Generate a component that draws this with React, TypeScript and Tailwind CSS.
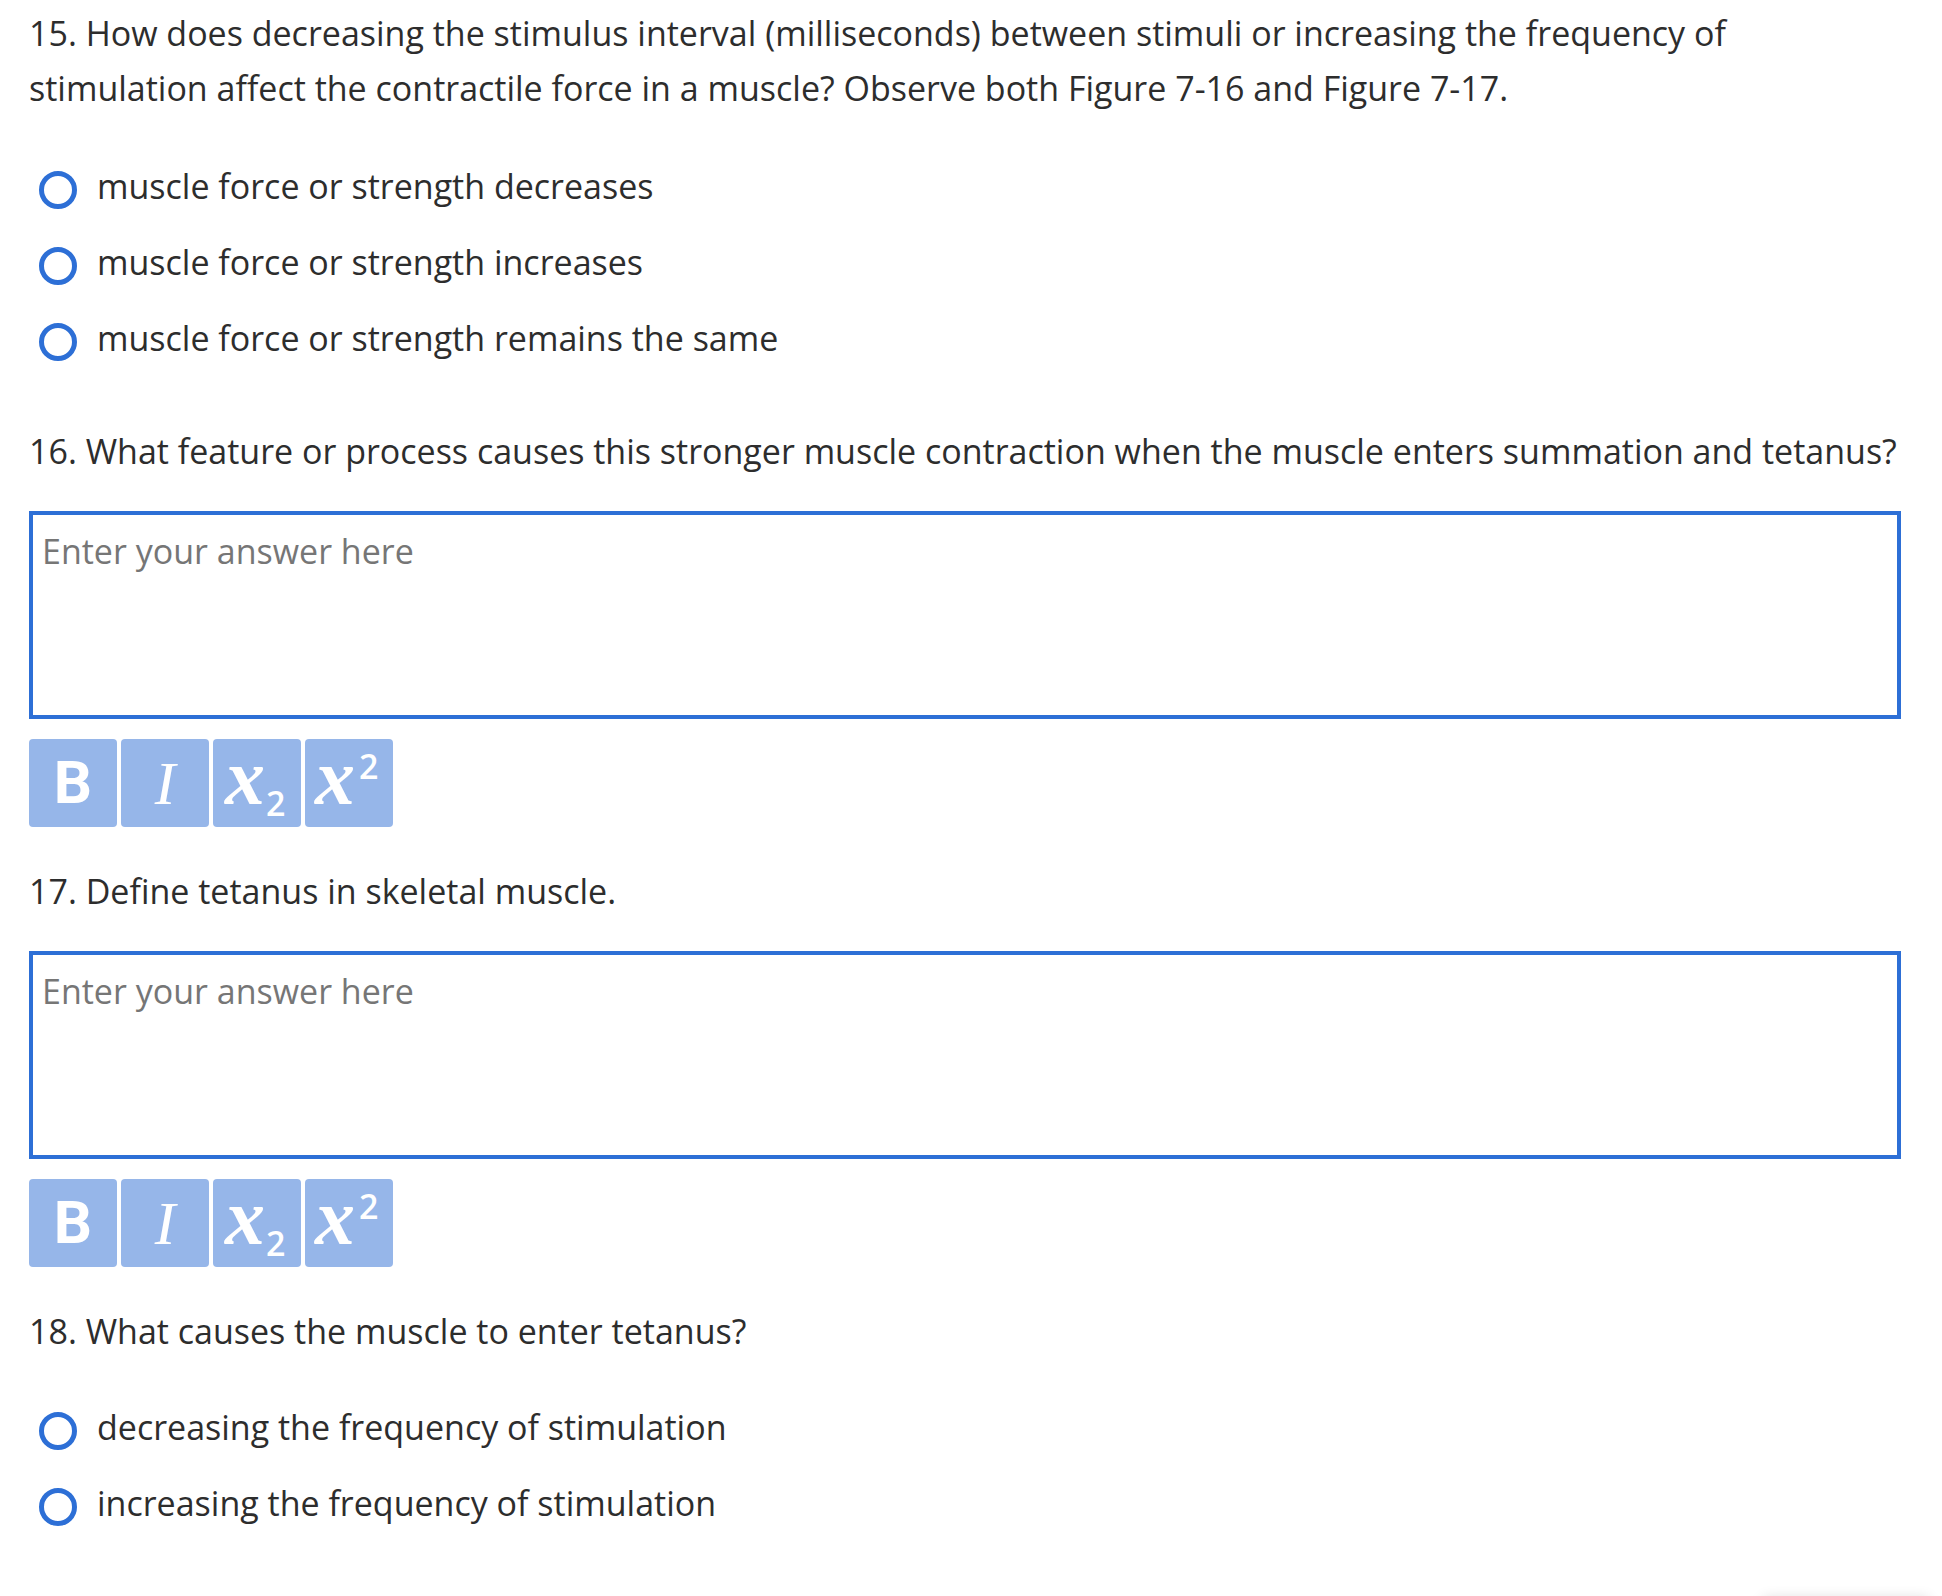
import { useState } from 'react';

const questionText = "text-[34px] leading-[55px] text-[#2d2d2d]";

function Radio({ label, checked, onSelect }: { label: string; checked: boolean; onSelect: () => void }) {
  return (
    <label className="flex items-center h-[55px] cursor-pointer" onClick={onSelect}>
      <span
        className={`ml-[10px] mr-[20px] mt-[6px] size-[38px] shrink-0 rounded-full border-[5px] border-[#2d6fd6] ${checked ? 'bg-[#2d6fd6]' : 'bg-white'}`}
      />
      <span className={questionText}>{label}</span>
    </label>
  );
}

function RadioGroup({ options }: { options: string[] }) {
  const [value, setValue] = useState<string | null>(null);
  return (
    <div className="flex flex-col gap-[21px]">
      {options.map((option) => (
        <Radio key={option} label={option} checked={value === option} onSelect={() => setValue(option)} />
      ))}
    </div>
  );
}

function Toolbar() {
  const btn = "flex size-[88px] rounded-[4px] bg-[#96b6e9] text-white";
  const mathX = "font-['Liberation_Serif',serif] text-[80px] font-bold italic leading-none";
  const digit = "relative font-['Open_Sans',sans-serif] text-[34px] font-semibold leading-none";
  return (
    <div className="mt-[20px] flex gap-[4px]">
      <button type="button" className={`${btn} items-center justify-center`}>
        <span className="font-['Roboto',sans-serif] text-[60px] font-bold leading-none">B</span>
      </button>
      <button type="button" className={`${btn} items-center justify-center`}>
        <span className="font-['Liberation_Serif',serif] text-[62px] italic leading-none">I</span>
      </button>
      <button type="button" className={`${btn} items-end pb-[10px] pl-[12px]`}>
        <span className="inline-flex items-baseline">
          <span className={mathX}>x</span>
          <span className={`${digit} top-[12px] ml-[1px]`}>2</span>
        </span>
      </button>
      <button type="button" className={`${btn} items-end pb-[10px] pl-[10px]`}>
        <span className="inline-flex items-baseline">
          <span className={mathX}>x</span>
          <span className={`${digit} -top-[25px] ml-[4px]`}>2</span>
        </span>
      </button>
    </div>
  );
}

function AnswerBox() {
  return (
    <>
      <textarea
        placeholder="Enter your answer here"
        className="block h-[208px] w-full resize-none border-[4px] border-[#2d6fd6] px-[9px] py-[13px] font-['Open_Sans',sans-serif] text-[34px] leading-[1.362] text-[#2d2d2d] outline-none placeholder:text-[#767676]"
      />
      <Toolbar />
    </>
  );
}

export default function App() {
  return (
    <div className="relative h-[1596px] overflow-hidden bg-white font-['Open_Sans',sans-serif]">
      <div className="w-[1901px] pl-[29px] pt-[6px]">
        <p className={questionText}>
          15. How does decreasing the stimulus interval (milliseconds) between stimuli or increasing the frequency of stimulation affect the contractile force in a muscle? Observe both Figure 7-16 and Figure 7-17.
        </p>
        <div className="mt-[43px]">
          <RadioGroup
            options={[
              'muscle force or strength decreases',
              'muscle force or strength increases',
              'muscle force or strength remains the same',
            ]}
          />
        </div>

        <p className={`${questionText} mt-[58px]`}>
          16. What feature or process causes this stronger muscle contraction when the muscle enters summation and tetanus?
        </p>
        <div className="mt-[32px]">
          <AnswerBox />
        </div>

        <p className={`${questionText} mt-[37px]`}>17. Define tetanus in skeletal muscle.</p>
        <div className="mt-[32px]">
          <AnswerBox />
        </div>

        <p className={`${questionText} mt-[37px]`}>18. What causes the muscle to enter tetanus?</p>
        <div className="mt-[41px]">
          <RadioGroup options={['decreasing the frequency of stimulation', 'increasing the frequency of stimulation']} />
        </div>
      </div>

      {/* edge of a floating panel peeking in from below */}
      <div className="absolute left-[1762px] top-[1598px] h-[60px] w-[168px] rounded-[6px] bg-white shadow-[0_0_14px_rgba(0,0,0,0.14)]" />
    </div>
  );
}
